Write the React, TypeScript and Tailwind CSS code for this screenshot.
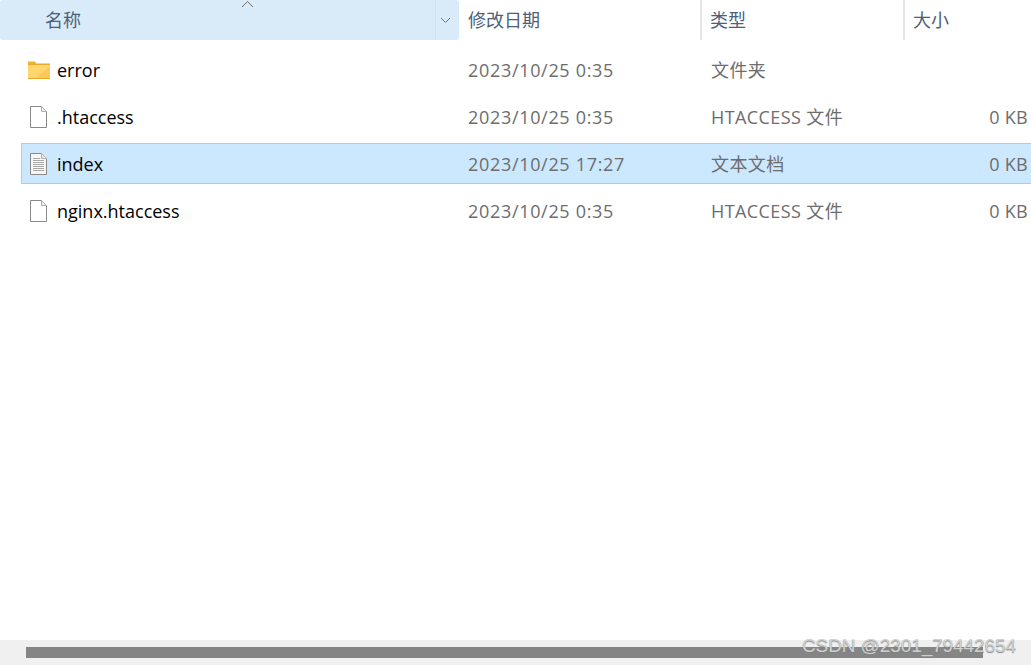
import React from "react";

type Kind = "folder" | "blank" | "text";

interface FileRow {
  name: string;
  date: string;
  type: string;
  size: string;
  kind: Kind;
  selected?: boolean;
}

const rows: FileRow[] = [
  { name: "error", date: "2023/10/25 0:35", type: "文件夹", size: "", kind: "folder" },
  { name: ".htaccess", date: "2023/10/25 0:35", type: "HTACCESS 文件", size: "0 KB", kind: "blank" },
  { name: "index", date: "2023/10/25 17:27", type: "文本文档", size: "0 KB", kind: "text", selected: true },
  { name: "nginx.htaccess", date: "2023/10/25 0:35", type: "HTACCESS 文件", size: "0 KB", kind: "blank" },
];

const FileIcon = ({ kind }: { kind: Kind }) => {
  if (kind === "folder") {
    return (
      <svg width="22" height="18" viewBox="0 0 22 18">
        <path d="M0 .5h7l1.500 2.500H0z" fill="#f0b429" />
        <path d="M0 3h22v15H0z" fill="#ffd76e" />
        <path d="M22 5v13H7z" fill="#fdc85a" />
        <path d="M0 2.500h22v1.500H0zM0 17h22v1H0z" fill="#e8a92c" />
      </svg>
    );
  }
  return (
    <svg className="mr-[1px]" width="17" height="22" viewBox="0 0 17 22">
      <path
        d="M.5.500h11l5 5v16H.5z"
        fill={kind === "text" ? "#f7f7f7" : "#ffffff"}
        stroke="#8a8a8a"
      />
      <path d="M11.500.500v5h5" fill="#ececec" stroke="#b0b0b0" />
      {kind === "text" && (
        <path
          d="M3 5.500h7M3 7.500h11M3 9.500h11M3 11.500h11M3 13.500h11M3 15.500h11M3 17.500h11"
          stroke="#a8a8a8"
        />
      )}
    </svg>
  );
};

export default function App() {
  return (
    <div className="relative flex h-[665px] w-[1031px] flex-col overflow-hidden bg-white font-['Open_Sans','Noto_Sans_CJK_SC',sans-serif] text-[18px]">
      <div className="flex-1">
        {/* column headers */}
        <div className="flex h-10 text-[#4c607a]">
          <div className="relative flex w-[459px] rounded-[3px] bg-[#d9ebf9]">
            <div className="flex flex-1 items-center pl-[45px]">名称</div>
            <svg className="absolute left-[241px] top-0" width="13" height="8" viewBox="0 0 13 8">
              <path d="M1 7l5.500-5.500L12 7" fill="none" stroke="#6d6d6d" />
            </svg>
            <div className="flex w-6 items-center justify-center border-l border-[#cfe3e4] pr-[4px]">
              <svg width="11" height="7" viewBox="0 0 11 7">
                <path d="M1 1l4.500 4.500L10 1" fill="none" stroke="#6d7480" />
              </svg>
            </div>
          </div>
          <div className="flex w-[243px] items-center border-r-2 border-[#e5e5e5] pl-[9px]">修改日期</div>
          <div className="flex w-[203px] items-center border-r-2 border-[#e5e5e5] pl-[8px]">类型</div>
          <div className="flex flex-1 items-center pl-[8px]">大小</div>
        </div>

        {/* file rows */}
        <div className="flex flex-col gap-[6px] pl-[21px] pt-[9px]">
          {rows.map((row) => (
            <div
              key={row.name}
              className={`flex h-[41px] items-center border border-r-0 pt-[1px] ${
                row.selected ? "border-[#99d1ff] bg-[#cce8ff]" : "border-transparent"
              }`}
            >
              <div className="flex w-[437px] items-center">
                <div className="flex w-[35px] justify-center pr-[1px]">
                  <FileIcon kind={row.kind} />
                </div>
                <span className="text-black">{row.name}</span>
              </div>
              <div className="w-[243px] pl-[9px] tracking-[0.68px] text-[#6d6d6d]">{row.date}</div>
              <div className="w-[270px] pl-[9px] tracking-[0.4px] text-[#6d6d6d]">{row.type}</div>
              <div className="flex-1 pr-[3px] text-right tracking-[0.3px] text-[#6d6d6d]">{row.size}</div>
            </div>
          ))}
        </div>
      </div>

      {/* horizontal scrollbar */}
      <div className="h-[25px] bg-[#f0f0f0] pl-[26px] pt-[7px]">
        <div className="h-[11px] w-[957px] bg-[#858585]" />
      </div>

      {/* watermark */}
      <div className="absolute left-[802px] top-[635px] font-['Liberation_Sans',sans-serif] text-[19px] leading-[22px] tracking-[-0.1px] text-[#d0d0d0] [text-shadow:0_1px_1px_#808080]">
        CSDN @2301_79442654
      </div>
    </div>
  );
}
